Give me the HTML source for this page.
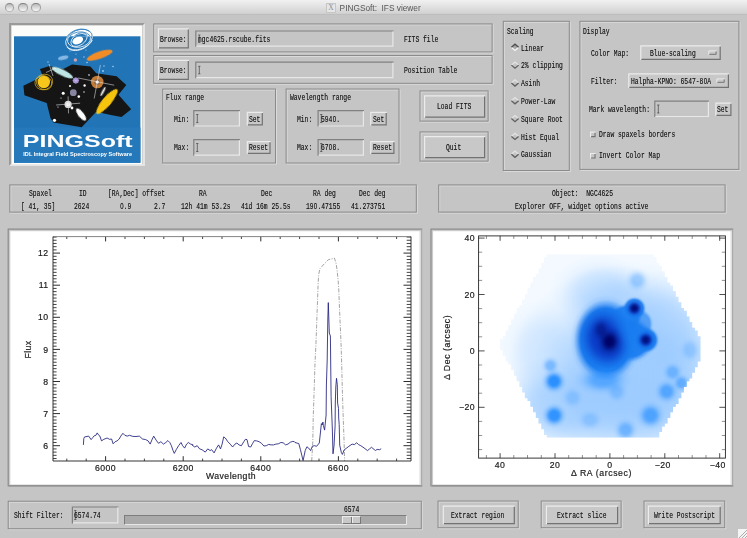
<!DOCTYPE html>
<html lang="en"><head><meta charset="utf-8"><title>PINGSoft: IFS viewer</title>
<style>
html,body{margin:0;padding:0}
body{width:747px;height:538px;overflow:hidden;background:#c5c5c5;position:relative;font-family:"Liberation Mono",monospace}
div,svg{position:absolute;box-sizing:content-box}
.m{font:8.8px/14px "Liberation Mono",monospace;color:#1c1c1c;text-shadow:0 0 0.45px rgba(20,20,20,.55);white-space:pre;transform-origin:0 0;transform:scaleX(0.722);height:14px}
.z{display:inline-block;width:5.280px;text-align:center;font-family:"Liberation Sans",sans-serif;font-size:8.27px}
.fl{fill:none;stroke:#fff;stroke-opacity:.38;stroke-width:1}.fk{fill:none;stroke:#8b8b8b;stroke-width:1}
.bl{fill:none;stroke:#ececec}.bd{fill:none;stroke:#727272}.sd{fill:none;stroke:#808080}.sl{fill:none;stroke:#e8e8e8}
.pf{background:#fff;border:2px solid;border-color:#9a9a9a #e4e4e4 #e4e4e4 #9a9a9a}
#tb{left:0;top:0;width:747px;height:15px;background:linear-gradient(#f1f1f1 0,#d2d2d2 13.4px,#c0c0c0 14.2px,#bebebe 14.5px,#c5c5c5 15px)}
.tl{width:7.6px;height:7.6px;border-radius:50%;border:0.8px solid;border-color:#858585 #9c9c9c #b8b8b8 #9c9c9c;background:linear-gradient(#b9b9b9,#dcdcdc 55%,#f6f6f6)}
#tt{left:339.6px;top:2.1px;font:8.3px/12px "Liberation Sans",sans-serif;color:#555;white-space:pre;opacity:.99}
#xi{left:326px;top:3.4px;width:8px;height:8px;background:#e6e6e6;border:1px solid #c6c6c6;font:7.5px/8px "Liberation Serif",serif;color:#8c8c8c;text-align:center}
#xi span{position:relative}
#tr{left:124.2px;top:515.3px;width:281px;height:7.4px;background:#a9a9a9;border:1px solid;border-color:#7d7d7d #e6e6e6 #e6e6e6 #7d7d7d}
#th{left:342px;top:516.4px;width:17.4px;height:5.4px;background:linear-gradient(90deg,#c8c8c8 0,#c8c8c8 8.2px,#777 8.2px,#777 8.9px,#eee 8.9px,#eee 9.6px,#c8c8c8 9.6px);border:0.9px solid;border-color:#eee #777 #777 #eee}
#p1 text,#p2 text{font:8.7px "Liberation Sans",sans-serif;fill:#161616;stroke:#161616;stroke-width:0.18px;letter-spacing:0.45px}
.pl{opacity:.99}
#lg text{opacity:.99}
#grip{left:738px;top:529px;width:9px;height:9px;background:#f4f4f4}
</style></head>
<body>
<svg id="bg" style="left:0;top:0" width="747" height="538" viewBox="0 0 747 538"><rect x="154.70" y="24.90" width="338.40" height="28.00" class="fl"/><rect x="153.70" y="23.90" width="338.40" height="28.00" class="fk"/><rect x="157.80" y="28.20" width="31.10" height="20.20" fill="#c8c8c8"/><path d="M158.40 48.40V28.80H188.90" class="bl" stroke-width="1.2"/><path d="M159.00 47.80H188.30V29.40" class="bd" stroke-width="1.2"/><path d="M195.80 46.70V31.00H393.50" class="sd" stroke-width="1.2"/><path d="M196.40 46.10H392.90V31.60" class="sl" stroke-width="1.2"/><rect x="154.70" y="56.50" width="338.40" height="27.80" class="fl"/><rect x="153.70" y="55.50" width="338.40" height="27.80" class="fk"/><rect x="157.80" y="59.80" width="31.10" height="20.20" fill="#c8c8c8"/><path d="M158.40 80.00V60.40H188.90" class="bl" stroke-width="1.2"/><path d="M159.00 79.40H188.30V61.00" class="bd" stroke-width="1.2"/><path d="M195.80 78.20V62.20H393.50" class="sd" stroke-width="1.2"/><path d="M196.40 77.60H392.90V62.80" class="sl" stroke-width="1.2"/><path d="M199.30 35.00V42.50M198.20 35.00h2.2M198.20 42.50h2.2" stroke="#4a4a4a" stroke-width="0.75" fill="none"/><path d="M199.30 66.30V73.80M198.20 66.30h2.2M198.20 73.80h2.2" stroke="#4a4a4a" stroke-width="0.75" fill="none"/><rect x="163.70" y="90.00" width="112.80" height="74.00" class="fl"/><rect x="162.70" y="89.00" width="112.80" height="74.00" class="fk"/><path d="M193.80 126.60V110.60H240.00" class="sd" stroke-width="1.2"/><path d="M194.40 126.00H239.40V111.20" class="sl" stroke-width="1.2"/><rect x="246.70" y="111.80" width="16.20" height="13.70" fill="#c8c8c8"/><path d="M247.30 125.50V112.40H262.90" class="bl" stroke-width="1.2"/><path d="M247.90 124.90H262.30V113.00" class="bd" stroke-width="1.2"/><path d="M193.80 155.80V139.60H240.00" class="sd" stroke-width="1.2"/><path d="M194.40 155.20H239.40V140.20" class="sl" stroke-width="1.2"/><rect x="246.70" y="141.00" width="23.90" height="13.00" fill="#c8c8c8"/><path d="M247.30 154.00V141.60H270.60" class="bl" stroke-width="1.2"/><path d="M247.90 153.40H270.00V142.20" class="bd" stroke-width="1.2"/><path d="M197.30 114.50V122.50M196.20 114.50h2.2M196.20 122.50h2.2" stroke="#4a4a4a" stroke-width="0.75" fill="none"/><path d="M197.30 143.50V151.50M196.20 143.50h2.2M196.20 151.50h2.2" stroke="#4a4a4a" stroke-width="0.75" fill="none"/><rect x="287.10" y="90.00" width="112.90" height="74.00" class="fl"/><rect x="286.10" y="89.00" width="112.90" height="74.00" class="fk"/><path d="M318.10 126.60V110.60H364.00" class="sd" stroke-width="1.2"/><path d="M318.70 126.00H363.40V111.20" class="sl" stroke-width="1.2"/><rect x="370.20" y="111.80" width="16.60" height="13.70" fill="#c8c8c8"/><path d="M370.80 125.50V112.40H386.80" class="bl" stroke-width="1.2"/><path d="M371.40 124.90H386.20V113.00" class="bd" stroke-width="1.2"/><path d="M318.10 155.80V139.60H364.00" class="sd" stroke-width="1.2"/><path d="M318.70 155.20H363.40V140.20" class="sl" stroke-width="1.2"/><rect x="370.20" y="141.00" width="24.30" height="13.00" fill="#c8c8c8"/><path d="M370.80 154.00V141.60H394.50" class="bl" stroke-width="1.2"/><path d="M371.40 153.40H393.90V142.20" class="bd" stroke-width="1.2"/><path d="M321.30 114.50V122.50M320.20 114.50h2.2M320.20 122.50h2.2" stroke="#4a4a4a" stroke-width="0.75" fill="none"/><path d="M321.30 143.50V151.50M320.20 143.50h2.2M320.20 151.50h2.2" stroke="#4a4a4a" stroke-width="0.75" fill="none"/><rect x="421.00" y="91.90" width="68.10" height="30.20" class="fl"/><rect x="420.00" y="90.90" width="68.10" height="30.20" class="fk"/><rect x="424.00" y="95.30" width="61.20" height="22.40" fill="#c8c8c8"/><path d="M424.60 117.70V95.90H485.20" class="bl" stroke-width="1.2"/><path d="M425.20 117.10H484.60V96.50" class="bd" stroke-width="1.2"/><rect x="421.00" y="132.90" width="68.10" height="29.20" class="fl"/><rect x="420.00" y="131.90" width="68.10" height="29.20" class="fk"/><rect x="424.00" y="136.00" width="61.20" height="22.20" fill="#c8c8c8"/><path d="M424.60 158.20V136.60H485.20" class="bl" stroke-width="1.2"/><path d="M425.20 157.60H484.60V137.20" class="bd" stroke-width="1.2"/><rect x="504.30" y="22.30" width="66.00" height="149.20" class="fl"/><rect x="503.30" y="21.30" width="66.00" height="149.20" class="fk"/><path d="M511.40 47.30L515.00 44.20L518.60 47.30L515.00 50.40Z" fill="#a6a6a6"/><path d="M511.40 47.30L515.00 50.40L518.60 47.30" fill="none" stroke="#f6f6f6" stroke-width="1.3"/><path d="M511.40 47.30L515.00 44.20L518.60 47.30" fill="none" stroke="#4e4e4e" stroke-width="1.3"/><path d="M511.40 65.12L515.00 62.02L518.60 65.12" fill="none" stroke="#e4e4e4" stroke-width="1.2"/><path d="M511.40 65.12L515.00 68.22L518.60 65.12" fill="none" stroke="#606060" stroke-width="1.3"/><path d="M511.40 82.94L515.00 79.84L518.60 82.94" fill="none" stroke="#e4e4e4" stroke-width="1.2"/><path d="M511.40 82.94L515.00 86.04L518.60 82.94" fill="none" stroke="#606060" stroke-width="1.3"/><path d="M511.40 100.76L515.00 97.66L518.60 100.76" fill="none" stroke="#e4e4e4" stroke-width="1.2"/><path d="M511.40 100.76L515.00 103.86L518.60 100.76" fill="none" stroke="#606060" stroke-width="1.3"/><path d="M511.40 118.58L515.00 115.48L518.60 118.58" fill="none" stroke="#e4e4e4" stroke-width="1.2"/><path d="M511.40 118.58L515.00 121.68L518.60 118.58" fill="none" stroke="#606060" stroke-width="1.3"/><path d="M511.40 136.40L515.00 133.30L518.60 136.40" fill="none" stroke="#e4e4e4" stroke-width="1.2"/><path d="M511.40 136.40L515.00 139.50L518.60 136.40" fill="none" stroke="#606060" stroke-width="1.3"/><path d="M511.40 154.22L515.00 151.12L518.60 154.22" fill="none" stroke="#e4e4e4" stroke-width="1.2"/><path d="M511.40 154.22L515.00 157.32L518.60 154.22" fill="none" stroke="#606060" stroke-width="1.3"/><rect x="580.90" y="22.30" width="159.00" height="148.10" class="fl"/><rect x="579.90" y="21.30" width="159.00" height="148.10" class="fk"/><rect x="640.20" y="45.30" width="80.60" height="14.60" fill="#c8c8c8"/><path d="M640.80 59.90V45.90H720.80" class="bl" stroke-width="1.2"/><path d="M641.40 59.30H720.20V46.50" class="bd" stroke-width="1.2"/><rect x="708.30" y="50.40" width="8.30" height="4.40" fill="#c8c8c8"/><path d="M708.80 54.80V50.90H716.60" class="bl" stroke-width="1.0"/><path d="M709.30 54.30H716.10V51.40" class="bd" stroke-width="1.0"/><rect x="628.20" y="73.30" width="100.80" height="14.60" fill="#c8c8c8"/><path d="M628.80 87.90V73.90H729.00" class="bl" stroke-width="1.2"/><path d="M629.40 87.30H728.40V74.50" class="bd" stroke-width="1.2"/><rect x="716.40" y="78.40" width="8.30" height="4.40" fill="#c8c8c8"/><path d="M716.90 82.80V78.90H724.70" class="bl" stroke-width="1.0"/><path d="M717.40 82.30H724.20V79.40" class="bd" stroke-width="1.0"/><path d="M654.80 117.10V101.10H709.00" class="sd" stroke-width="1.2"/><path d="M655.40 116.50H708.40V101.70" class="sl" stroke-width="1.2"/><path d="M658.30 105.00V113.00M657.20 105.00h2.2M657.20 113.00h2.2" stroke="#4a4a4a" stroke-width="0.75" fill="none"/><rect x="715.30" y="102.50" width="16.20" height="13.50" fill="#c8c8c8"/><path d="M715.90 116.00V103.10H731.50" class="bl" stroke-width="1.2"/><path d="M716.50 115.40H730.90V103.70" class="bd" stroke-width="1.2"/><path d="M590.55 137.20V132.15H595.60" class="bl" stroke-width="1.1"/><path d="M591.10 136.65H595.05V132.70" class="bd" stroke-width="1.1"/><path d="M590.55 158.60V153.55H595.60" class="bl" stroke-width="1.1"/><path d="M591.10 158.05H595.05V154.10" class="bd" stroke-width="1.1"/><rect x="10.80" y="185.90" width="406.50" height="27.20" class="fl"/><rect x="9.80" y="184.90" width="406.50" height="27.20" class="fk"/><rect x="439.70" y="185.90" width="286.40" height="27.20" class="fl"/><rect x="438.70" y="184.90" width="286.40" height="27.20" class="fk"/><rect x="7.60" y="228.60" width="414.60" height="257.80" fill="#cbcbcb"/><path d="M8.20 486.40V229.20H422.20" fill="none" stroke="#8a8a8a" stroke-width="1.2"/><path d="M10.30 484.90H420.10V231.20" fill="none" stroke="#e2e2e2" stroke-width="1.4"/><path d="M8.80 485.80H422.20" fill="none" stroke="#7c7c7c" stroke-width="1.2"/><path d="M421.70 486.40V229.80" fill="none" stroke="#a4a4a4" stroke-width="1"/><rect x="10.30" y="231.20" width="409.20" height="253.10" fill="#fff"/><rect x="430.40" y="228.60" width="302.80" height="257.80" fill="#cbcbcb"/><path d="M431.00 486.40V229.20H733.20" fill="none" stroke="#8a8a8a" stroke-width="1.2"/><path d="M433.10 484.90H731.20V231.20" fill="none" stroke="#e2e2e2" stroke-width="1.4"/><path d="M431.60 485.80H733.20" fill="none" stroke="#7c7c7c" stroke-width="1.2"/><path d="M732.70 486.40V229.80" fill="none" stroke="#a4a4a4" stroke-width="1"/><rect x="433.10" y="231.20" width="297.50" height="253.10" fill="#fff"/><rect x="9.20" y="502.20" width="413.10" height="27.50" class="fl"/><rect x="8.20" y="501.20" width="413.10" height="27.50" class="fk"/><path d="M72.40 523.50V507.00H118.40" class="sd" stroke-width="1.2"/><path d="M73.00 522.90H117.80V507.60" class="sl" stroke-width="1.2"/><path d="M75.30 510.50V519.50M74.20 510.50h2.2M74.20 519.50h2.2" stroke="#4a4a4a" stroke-width="0.75" fill="none"/><rect x="439.00" y="502.00" width="80.20" height="26.70" class="fl"/><rect x="438.00" y="501.00" width="80.20" height="26.70" class="fk"/><rect x="442.70" y="505.60" width="72.20" height="18.70" fill="#c8c8c8"/><path d="M443.30 524.30V506.20H514.90" class="bl" stroke-width="1.2"/><path d="M443.90 523.70H514.30V506.80" class="bd" stroke-width="1.2"/><rect x="542.20" y="502.00" width="79.90" height="26.70" class="fl"/><rect x="541.20" y="501.00" width="79.90" height="26.70" class="fk"/><rect x="545.80" y="505.60" width="72.40" height="18.70" fill="#c8c8c8"/><path d="M546.40 524.30V506.20H618.20" class="bl" stroke-width="1.2"/><path d="M547.00 523.70H617.60V506.80" class="bd" stroke-width="1.2"/><rect x="645.00" y="502.00" width="80.70" height="26.70" class="fl"/><rect x="644.00" y="501.00" width="80.70" height="26.70" class="fk"/><rect x="647.80" y="505.60" width="73.00" height="18.70" fill="#c8c8c8"/><path d="M648.40 524.30V506.20H720.80" class="bl" stroke-width="1.2"/><path d="M649.00 523.70H720.20V506.80" class="bd" stroke-width="1.2"/></svg>
<div id="tb"></div>
<div class="tl" style="left:4.9px;top:2.7px"></div>
<div class="tl" style="left:18.0px;top:2.7px"></div>
<div class="tl" style="left:31.4px;top:2.7px"></div>
<div id="xi"><span>X</span></div>
<div id="tt">PINGSoft:  IFS viewer</div>
<div class="pf" style="left:9.2px;top:23.2px;width:131.4px;height:138.4px;border-width:2px 2px 2px 2px;background:none"></div>
<svg id="lg" style="left:0;top:0" width="160" height="170" viewBox="0 0 160 170">
<defs><filter id="b1" x="-30%" y="-30%" width="160%" height="160%"><feGaussianBlur stdDeviation="0.7"/></filter><filter id="b2" x="-30%" y="-30%" width="160%" height="160%"><feGaussianBlur stdDeviation="0.35"/></filter></defs>
<rect x="11.6" y="25.6" width="130.6" height="138.6" fill="#fcfcfa"/>
<rect x="14" y="36.3" width="126.4" height="126.5" fill="#2175b7"/>
<rect x="14" y="127.5" width="126.4" height="35.3" fill="#2579bb"/>
<polygon points="39.9,68.9 49.6,66.1 63.2,68.9 72,64.6 90.4,66.5 96.2,73.3 116.6,76.2 126.3,85 118.5,94.7 131.2,109.2 121.5,117 110.8,115 96.2,111.7 81.7,127.3 53.5,122.4 50.6,118.5 46.7,103 24.4,95.2 23.4,85.7 42.8,76.2" fill="#151515"/>
<clipPath id="cw"><rect x="11.6" y="25.6" width="130.6" height="10.7"/></clipPath><clipPath id="cb"><rect x="14" y="36.3" width="126.4" height="60"/></clipPath>
<g clip-path="url(#cw)"><g fill="none" stroke="#2b7bbd" stroke-width="0.75" transform="translate(79 39.6) rotate(-24)"><ellipse rx="14" ry="9.5"/><ellipse rx="11.6" ry="7.6" transform="rotate(14)"/><ellipse rx="9" ry="5.6" transform="rotate(-10)"/><path d="M-14 2C-12 10 2 13 12 6M-9 -8C-2 -12 9 -10 13 -3" /><ellipse rx="8.2" ry="5" fill="#2b7bbd" stroke="none"/></g></g>
<g clip-path="url(#cb)"><g fill="none" stroke="#fff" stroke-width="0.75" transform="translate(79 39.6) rotate(-24)"><ellipse rx="14" ry="9.5"/><ellipse rx="11.6" ry="7.6" transform="rotate(14)"/><ellipse rx="9" ry="5.6" transform="rotate(-10)"/><path d="M-14 2C-12 10 2 13 12 6M-9 -8C-2 -12 9 -10 13 -3" /><ellipse rx="5.6" ry="3.6" fill="#fff" stroke="none" transform="translate(-1.5 0.3)"/></g></g>
<ellipse cx="99.6" cy="55.2" rx="13.5" ry="3.6" fill="#f28c28" transform="rotate(-19 99.6 55.2)" filter="url(#b2)"/>
<ellipse cx="63.2" cy="57.8" rx="5.2" ry="2" fill="#86b8e6" transform="rotate(-12 63.2 57.8)" filter="url(#b2)"/>
<circle cx="75.4" cy="60" r="1.7" fill="#cfa3b4"/>
<g fill="#9fd0f5"><circle cx="48" cy="62" r="0.7"/><circle cx="84" cy="57" r="0.7"/><circle cx="87" cy="62.5" r="0.8"/><circle cx="104" cy="66" r="0.7"/><circle cx="113" cy="66.5" r="0.8"/><circle cx="103" cy="71" r="0.9"/><circle cx="76" cy="54" r="0.6"/><circle cx="86" cy="50" r="0.6"/><circle cx="70" cy="51" r="0.5"/></g>
<ellipse cx="62.3" cy="72.6" rx="11.8" ry="3" fill="#bfe6e4" transform="rotate(26 62.3 72.6)" filter="url(#b2)"/>
<path d="M49 64L53 76M46 72.5L56 68" stroke="#fff" stroke-width="0.5" fill="none"/>
<g transform="translate(43.8 82)"><circle r="6.2" fill="#f7c61a"/><g fill="none" stroke="#f0c020" stroke-width="0.6"><ellipse rx="9" ry="7.6" transform="rotate(-20)"/><ellipse rx="8" ry="6.8" transform="rotate(30) translate(0.6 0.4)"/></g></g>
<g transform="translate(97.2 82)"><circle r="6.3" fill="#c37b35"/><circle r="3" fill="#8a6a50"/><circle r="1.6" fill="#fff"/><path d="M-19 -4L17 3.2M3.2 -17L-3 16.5" stroke="#e8e8e8" stroke-width="0.55" fill="none"/></g>
<circle cx="75.8" cy="80.6" r="3" fill="#9c86cc"/><path d="M72.5 80.6h6.6M75.8 77.3v6.6M73.5 78.3l4.6 4.6M73.5 82.9l4.6 -4.6" stroke="#d6c8f0" stroke-width="0.4"/>
<circle cx="73.3" cy="92.7" r="3.4" fill="#86849f"/>
<g fill="#fff"><circle cx="70" cy="86" r="1"/><circle cx="84.6" cy="85.5" r="1.2"/><circle cx="63.2" cy="93.3" r="1.5"/><circle cx="78.8" cy="96.6" r="1.3"/><circle cx="54.5" cy="120.3" r="1.6"/><circle cx="89" cy="75" r="0.8"/><circle cx="84" cy="92" r="0.7"/><circle cx="61" cy="98" r="0.6"/><circle cx="72" cy="108" r="1.4"/><circle cx="58" cy="107" r="0.6"/></g>
<g transform="translate(68.1 104.4)"><circle r="3.6" fill="#d8d8d8" filter="url(#b1)"/><circle r="1.8" fill="#fff"/><path d="M-12 0.6L12 -1.2M0 -8L0.4 9" stroke="#ddd" stroke-width="0.6"/></g>
<ellipse cx="106.9" cy="101.5" rx="15.8" ry="4.4" fill="#f7c411" transform="rotate(-50 106.9 101.5)" filter="url(#b1)"/>
<ellipse cx="103" cy="91.5" rx="5" ry="1" fill="#eee" transform="rotate(-62 103 91.5)" filter="url(#b2)"/>
<ellipse cx="81" cy="114.6" rx="7.5" ry="2.8" fill="#fff" transform="rotate(52 81 114.6)" filter="url(#b1)"/>
<text x="0" y="0" transform="translate(22.8 147.1) scale(1.595 1)" style="font:bold 15.7px 'Liberation Sans',sans-serif;fill:#fff">PINGSoft</text>
<text x="0" y="0" transform="translate(23.3 155.7) scale(1.14 1)" style="font:bold 4.9px 'Liberation Sans',sans-serif;fill:#fff">IDL Integral Field Spectroscopy Software</text>
</svg>
<div class="m" style="left:159.90px;top:32.85px;">Browse:</div>
<div class="m" style="left:198.30px;top:32.85px;">ngc4625.rscube.fits</div>
<div class="m" style="left:403.60px;top:32.85px;">FITS file</div>
<div class="m" style="left:159.90px;top:64.35px;">Browse:</div>
<div class="m" style="left:403.60px;top:64.35px;">Position Table</div>
<div class="m" style="left:165.80px;top:91.35px;">Flux range</div>
<div class="m" style="left:173.50px;top:112.85px;">Min:</div>
<div class="m" style="left:249.20px;top:112.85px;">Set</div>
<div class="m" style="left:173.50px;top:141.35px;">Max:</div>
<div class="m" style="left:249.20px;top:141.35px;">Reset</div>
<div class="m" style="left:289.50px;top:91.35px;">Wavelength range</div>
<div class="m" style="left:296.80px;top:112.85px;">Min:</div>
<div class="m" style="left:320.50px;top:112.85px;">594<span class="z">0</span>.</div>
<div class="m" style="left:372.70px;top:112.85px;">Set</div>
<div class="m" style="left:296.80px;top:141.35px;">Max:</div>
<div class="m" style="left:320.50px;top:141.35px;">67<span class="z">0</span>8.</div>
<div class="m" style="left:372.70px;top:141.35px;">Reset</div>
<div class="m" style="left:436.60px;top:100.35px;">Load FITS</div>
<div class="m" style="left:446.30px;top:141.35px;">Quit</div>
<div class="m" style="left:506.70px;top:24.85px;">Scaling</div>
<div class="m" style="left:520.70px;top:41.55px;">Linear</div>
<div class="m" style="left:520.70px;top:59.37px;">2% clipping</div>
<div class="m" style="left:520.70px;top:77.19px;">Asinh</div>
<div class="m" style="left:520.70px;top:95.01px;">Power-Law</div>
<div class="m" style="left:520.70px;top:112.83px;">Square Root</div>
<div class="m" style="left:520.70px;top:130.65px;">Hist Equal</div>
<div class="m" style="left:520.70px;top:148.47px;">Gaussian</div>
<div class="m" style="left:583.00px;top:24.85px;">Display</div>
<div class="m" style="left:590.60px;top:47.05px;">Color Map:</div>
<div class="m" style="left:650.40px;top:47.05px;">Blue-scaling</div>
<div class="m" style="left:590.60px;top:75.05px;">Filter:</div>
<div class="m" style="left:631.40px;top:75.05px;">Halpha-KPNO: 6547-8<span class="z">0</span>A</div>
<div class="m" style="left:588.60px;top:103.25px;">Mark wavelength:</div>
<div class="m" style="left:716.90px;top:103.25px;">Set</div>
<div class="m" style="left:598.80px;top:127.95px;">Draw spaxels borders</div>
<div class="m" style="left:598.80px;top:149.45px;">Invert Color Map</div>
<div class="m" style="left:28.60px;top:187.15px;">Spaxel</div>
<div class="m" style="left:21.20px;top:199.65px;">[ 41, 35]</div>
<div class="m" style="left:78.70px;top:187.15px;">ID</div>
<div class="m" style="left:74.40px;top:199.65px;">2624</div>
<div class="m" style="left:107.90px;top:187.15px;">[RA,Dec] offset</div>
<div class="m" style="left:119.90px;top:199.65px;"><span class="z">0</span>.9</div>
<div class="m" style="left:154.30px;top:199.65px;">2.7</div>
<div class="m" style="left:198.70px;top:187.15px;">RA</div>
<div class="m" style="left:180.80px;top:199.65px;">12h 41m 53.2s</div>
<div class="m" style="left:260.50px;top:187.15px;">Dec</div>
<div class="m" style="left:240.90px;top:199.65px;">41d 16m 25.5s</div>
<div class="m" style="left:312.90px;top:187.15px;">RA deg</div>
<div class="m" style="left:305.80px;top:199.65px;">19<span class="z">0</span>.47155</div>
<div class="m" style="left:358.70px;top:187.15px;">Dec deg</div>
<div class="m" style="left:351.00px;top:199.65px;">41.273751</div>
<div class="m" style="left:552.30px;top:186.85px;">Object:  NGC4625</div>
<div class="m" style="left:515.30px;top:199.65px;">Explorer OFF, widget options active</div>
<svg id="p1" style="left:0;top:0" width="747" height="538" viewBox="0 0 747 538">
<polyline points="311.7,461.0 312.8,442.0 313.2,418.0 313.9,397.7 315.0,363.0 316.0,342.7 316.6,326.6 317.3,306.0 318.2,282.3 318.7,274.8 319.8,268.9 324.1,264.0 328.4,259.7 334.4,258.1 336.0,263.0 337.0,269.4 338.1,280.2 338.7,287.7 339.4,306.0 340.3,326.6 341.0,342.7 341.6,361.0 342.4,392.3 343.2,417.0 344.1,442.0 344.6,461.0" fill="none" stroke="#7c7c7c" stroke-width="0.7" stroke-dasharray="4 1.4 1 1.4"/>
<polyline points="83.4,444.9 83.8,438.5 84.6,436.9 87.0,436.5 88.7,436.1 91.1,439.6 92.7,437.7 94.3,435.7 95.9,435.3 97.2,432.9 98.8,435.3 99.9,436.1 101.5,440.9 103.9,439.3 107.1,438.0 109.5,439.3 111.6,439.0 113.1,443.8 115.2,441.7 117.1,440.9 119.2,439.0 120.8,436.1 122.9,433.3 124.8,435.3 127.2,436.1 129.6,435.3 132.8,436.4 136.0,436.5 139.3,436.1 142.5,439.0 145.7,439.6 148.1,440.9 150.2,444.1 151.8,440.1 153.7,436.1 156.1,440.1 158.5,443.3 160.9,441.7 163.4,444.1 165.8,442.5 167.9,440.6 169.8,442.5 171.4,445.7 173.0,450.5 174.3,453.4 176.2,449.7 178.6,445.7 181.0,442.5 182.6,445.7 184.6,448.1 186.6,444.1 188.3,442.5 190.7,444.1 193.1,444.9 192.4,445.4 194.8,447.0 197.2,445.7 199.6,448.9 202.0,449.7 205.3,452.1 207.7,448.9 210.1,450.5 211.7,449.7 214.1,452.9 216.5,448.1 218.6,444.9 220.5,448.9 222.1,444.1 223.7,436.9 225.3,438.0 227.8,441.7 230.2,444.1 232.6,447.0 235.0,444.1 236.9,443.0 239.0,444.9 241.4,445.7 243.8,441.7 245.4,439.3 247.0,439.6 248.6,446.5 250.7,447.0 252.7,443.3 254.3,440.6 256.7,440.9 259.1,441.7 261.5,443.3 263.9,446.0 266.3,445.7 268.7,444.4 271.1,444.9 273.5,444.9 275.9,444.1 278.4,443.8 280.8,442.5 283.2,442.8 285.6,444.9 288.0,444.1 290.4,442.2 292.8,441.4 294.4,441.7 295.0,442.5 298.8,443.6 300.4,449.5 303.1,460.6 305.2,450.6 306.9,446.8 308.5,447.9 310.6,450.6 312.3,446.3 314.4,445.7 316.6,446.3 319.3,443.0 321.4,423.6 322.2,425.0 322.9,422.0 323.4,425.5 324.6,430.1 326.1,415.0 326.4,385.0 327.2,360.0 327.8,320.0 328.3,302.6 329.3,333.0 330.4,336.0 330.7,363.0 331.1,396.7 331.9,418.0 332.3,428.0 333.0,453.8 334.0,446.0 335.1,425.8 335.3,403.0 335.8,387.0 336.5,378.3 337.3,384.8 337.6,403.0 338.5,408.5 338.7,418.0 339.2,424.7 339.7,445.2 341.4,452.7 342.4,454.4 344.1,450.0 346.8,447.9 348.9,446.3 352.1,444.1 354.3,444.6 356.7,442.8 358.6,444.6 360.8,445.7 364.0,447.9 367.5,450.6 369.4,449.0 371.5,447.3 374.2,449.5 375.5,450.5 377.1,449.4 379.5,449.7 381.2,448.8" fill="none" stroke="#20207c" stroke-width="0.85" stroke-linejoin="round"/>
<path d="M66.8 461.0v-2.4M66.8 236.6v2.4M86.2 461.0v-2.4M86.2 236.6v2.4M125.0 461.0v-2.4M125.0 236.6v2.4M144.4 461.0v-2.4M144.4 236.6v2.4M163.8 461.0v-2.4M163.8 236.6v2.4M202.6 461.0v-2.4M202.6 236.6v2.4M222.0 461.0v-2.4M222.0 236.6v2.4M241.4 461.0v-2.4M241.4 236.6v2.4M280.2 461.0v-2.4M280.2 236.6v2.4M299.6 461.0v-2.4M299.6 236.6v2.4M319.0 461.0v-2.4M319.0 236.6v2.4M357.8 461.0v-2.4M357.8 236.6v2.4M377.2 461.0v-2.4M377.2 236.6v2.4M396.6 461.0v-2.4M396.6 236.6v2.4M53.0 458.54h3.6M411.0 458.54h-4.3M53.0 455.33h3.6M411.0 455.33h-4.3M53.0 452.12h3.6M411.0 452.12h-4.3M53.0 448.91h3.6M411.0 448.91h-4.3M53.0 442.49h3.6M411.0 442.49h-4.3M53.0 439.28h3.6M411.0 439.28h-4.3M53.0 436.07h3.6M411.0 436.07h-4.3M53.0 432.86h3.6M411.0 432.86h-4.3M53.0 429.65h3.6M411.0 429.65h-4.3M53.0 426.44h3.6M411.0 426.44h-4.3M53.0 423.23h3.6M411.0 423.23h-4.3M53.0 420.02h3.6M411.0 420.02h-4.3M53.0 416.81h3.6M411.0 416.81h-4.3M53.0 410.39h3.6M411.0 410.39h-4.3M53.0 407.18h3.6M411.0 407.18h-4.3M53.0 403.97h3.6M411.0 403.97h-4.3M53.0 400.76h3.6M411.0 400.76h-4.3M53.0 397.55h3.6M411.0 397.55h-4.3M53.0 394.34h3.6M411.0 394.34h-4.3M53.0 391.13h3.6M411.0 391.13h-4.3M53.0 387.92h3.6M411.0 387.92h-4.3M53.0 384.71h3.6M411.0 384.71h-4.3M53.0 378.29h3.6M411.0 378.29h-4.3M53.0 375.08h3.6M411.0 375.08h-4.3M53.0 371.87h3.6M411.0 371.87h-4.3M53.0 368.66h3.6M411.0 368.66h-4.3M53.0 365.45h3.6M411.0 365.45h-4.3M53.0 362.24h3.6M411.0 362.24h-4.3M53.0 359.03h3.6M411.0 359.03h-4.3M53.0 355.82h3.6M411.0 355.82h-4.3M53.0 352.61h3.6M411.0 352.61h-4.3M53.0 346.19h3.6M411.0 346.19h-4.3M53.0 342.98h3.6M411.0 342.98h-4.3M53.0 339.77h3.6M411.0 339.77h-4.3M53.0 336.56h3.6M411.0 336.56h-4.3M53.0 333.35h3.6M411.0 333.35h-4.3M53.0 330.14h3.6M411.0 330.14h-4.3M53.0 326.93h3.6M411.0 326.93h-4.3M53.0 323.72h3.6M411.0 323.72h-4.3M53.0 320.51h3.6M411.0 320.51h-4.3M53.0 314.09h3.6M411.0 314.09h-4.3M53.0 310.88h3.6M411.0 310.88h-4.3M53.0 307.67h3.6M411.0 307.67h-4.3M53.0 304.46h3.6M411.0 304.46h-4.3M53.0 301.25h3.6M411.0 301.25h-4.3M53.0 298.04h3.6M411.0 298.04h-4.3M53.0 294.83h3.6M411.0 294.83h-4.3M53.0 291.62h3.6M411.0 291.62h-4.3M53.0 288.41h3.6M411.0 288.41h-4.3M53.0 281.99h3.6M411.0 281.99h-4.3M53.0 278.78h3.6M411.0 278.78h-4.3M53.0 275.57h3.6M411.0 275.57h-4.3M53.0 272.36h3.6M411.0 272.36h-4.3M53.0 269.15h3.6M411.0 269.15h-4.3M53.0 265.94h3.6M411.0 265.94h-4.3M53.0 262.73h3.6M411.0 262.73h-4.3M53.0 259.52h3.6M411.0 259.52h-4.3M53.0 256.31h3.6M411.0 256.31h-4.3M53.0 249.89h3.6M411.0 249.89h-4.3M53.0 246.68h3.6M411.0 246.68h-4.3M53.0 243.47h3.6M411.0 243.47h-4.3M53.0 240.26h3.6M411.0 240.26h-4.3M53.0 237.05h3.6M411.0 237.05h-4.3" stroke="#2e2e2e" stroke-width="0.9" fill="none"/>
<path d="M105.6 461.0v-4.8M105.6 236.6v4.8M183.2 461.0v-4.8M183.2 236.6v4.8M260.8 461.0v-4.8M260.8 236.6v4.8M338.4 461.0v-4.8M338.4 236.6v4.8M53.0 445.70h7M411.0 445.70h-7.5M53.0 413.60h7M411.0 413.60h-7.5M53.0 381.50h7M411.0 381.50h-7.5M53.0 349.40h7M411.0 349.40h-7.5M53.0 317.30h7M411.0 317.30h-7.5M53.0 285.20h7M411.0 285.20h-7.5M53.0 253.10h7M411.0 253.10h-7.5" stroke="#222" stroke-width="0.95" fill="none"/>
<path d="M53.0 236.6H411.0" fill="none" stroke="#777" stroke-width="0.9"/><path d="M53.0 236.6V461.0H411.0V236.6" fill="none" stroke="#2a2a2a" stroke-width="0.95"/>
<g class="pl">
<text x="48.6" y="448.8" text-anchor="end">6</text>
<text x="48.6" y="416.7" text-anchor="end">7</text>
<text x="48.6" y="384.6" text-anchor="end">8</text>
<text x="48.6" y="352.5" text-anchor="end">9</text>
<text x="48.6" y="320.4" text-anchor="end">10</text>
<text x="48.6" y="288.3" text-anchor="end">11</text>
<text x="48.6" y="256.2" text-anchor="end">12</text>
<text x="105.6" y="471.2" text-anchor="middle">6000</text>
<text x="183.2" y="471.2" text-anchor="middle">6200</text>
<text x="260.8" y="471.2" text-anchor="middle">6400</text>
<text x="338.4" y="471.2" text-anchor="middle">6600</text>
<text x="231" y="479" text-anchor="middle">Wavelength</text>
<text transform="translate(30.5 349.5) rotate(-90)" text-anchor="middle">Flux</text>
</g></svg>
<svg id="p2" style="left:0;top:0" width="747" height="538" viewBox="0 0 747 538">
<defs><radialGradient id="ga"><stop offset="0.0" stop-color="#2a90ff" stop-opacity="1.000"/><stop offset="0.1" stop-color="#2a90ff" stop-opacity="1.000"/><stop offset="0.2" stop-color="#2a90ff" stop-opacity="1.000"/><stop offset="0.3" stop-color="#2a90ff" stop-opacity="0.982"/><stop offset="0.4" stop-color="#2a90ff" stop-opacity="0.852"/><stop offset="0.5" stop-color="#2a90ff" stop-opacity="0.641"/><stop offset="0.6" stop-color="#2a90ff" stop-opacity="0.418"/><stop offset="0.7" stop-color="#2a90ff" stop-opacity="0.237"/><stop offset="0.8" stop-color="#2a90ff" stop-opacity="0.116"/><stop offset="0.9" stop-color="#2a90ff" stop-opacity="0.050"/><stop offset="1.0" stop-color="#2a90ff" stop-opacity="0.000"/></radialGradient><radialGradient id="gl"><stop offset="0.0" stop-color="#9ccbff" stop-opacity="1.000"/><stop offset="0.1" stop-color="#9ccbff" stop-opacity="1.000"/><stop offset="0.2" stop-color="#9ccbff" stop-opacity="1.000"/><stop offset="0.3" stop-color="#9ccbff" stop-opacity="1.000"/><stop offset="0.4" stop-color="#9ccbff" stop-opacity="0.936"/><stop offset="0.5" stop-color="#9ccbff" stop-opacity="0.768"/><stop offset="0.6" stop-color="#9ccbff" stop-opacity="0.552"/><stop offset="0.7" stop-color="#9ccbff" stop-opacity="0.347"/><stop offset="0.8" stop-color="#9ccbff" stop-opacity="0.191"/><stop offset="0.9" stop-color="#9ccbff" stop-opacity="0.093"/><stop offset="1.0" stop-color="#9ccbff" stop-opacity="0.000"/></radialGradient><radialGradient id="gp"><stop offset="0.0" stop-color="#187cf0" stop-opacity="1.000"/><stop offset="0.1" stop-color="#187cf0" stop-opacity="1.000"/><stop offset="0.2" stop-color="#187cf0" stop-opacity="1.000"/><stop offset="0.3" stop-color="#187cf0" stop-opacity="1.000"/><stop offset="0.4" stop-color="#187cf0" stop-opacity="1.000"/><stop offset="0.5" stop-color="#187cf0" stop-opacity="1.000"/><stop offset="0.6" stop-color="#187cf0" stop-opacity="1.000"/><stop offset="0.7" stop-color="#187cf0" stop-opacity="0.981"/><stop offset="0.8" stop-color="#187cf0" stop-opacity="0.506"/><stop offset="0.9" stop-color="#187cf0" stop-opacity="0.102"/><stop offset="1.0" stop-color="#187cf0" stop-opacity="0.000"/></radialGradient><radialGradient id="gb"><stop offset="0.0" stop-color="#0a3cc8" stop-opacity="1.000"/><stop offset="0.1" stop-color="#0a3cc8" stop-opacity="1.000"/><stop offset="0.2" stop-color="#0a3cc8" stop-opacity="1.000"/><stop offset="0.3" stop-color="#0a3cc8" stop-opacity="1.000"/><stop offset="0.4" stop-color="#0a3cc8" stop-opacity="0.929"/><stop offset="0.5" stop-color="#0a3cc8" stop-opacity="0.745"/><stop offset="0.6" stop-color="#0a3cc8" stop-opacity="0.515"/><stop offset="0.7" stop-color="#0a3cc8" stop-opacity="0.308"/><stop offset="0.8" stop-color="#0a3cc8" stop-opacity="0.159"/><stop offset="0.9" stop-color="#0a3cc8" stop-opacity="0.070"/><stop offset="1.0" stop-color="#0a3cc8" stop-opacity="0.000"/></radialGradient><radialGradient id="gn"><stop offset="0.0" stop-color="#000468" stop-opacity="1.000"/><stop offset="0.1" stop-color="#000468" stop-opacity="1.000"/><stop offset="0.2" stop-color="#000468" stop-opacity="0.986"/><stop offset="0.3" stop-color="#000468" stop-opacity="0.883"/><stop offset="0.4" stop-color="#000468" stop-opacity="0.707"/><stop offset="0.5" stop-color="#000468" stop-opacity="0.508"/><stop offset="0.6" stop-color="#000468" stop-opacity="0.326"/><stop offset="0.7" stop-color="#000468" stop-opacity="0.187"/><stop offset="0.8" stop-color="#000468" stop-opacity="0.096"/><stop offset="0.9" stop-color="#000468" stop-opacity="0.044"/><stop offset="1.0" stop-color="#000468" stop-opacity="0.000"/></radialGradient>
<clipPath id="hx"><path d="M546.8 254.4L653.8 254.4L653.8 257.2L656.6 257.2L656.6 260.0L656.6 260.0L656.6 262.9L659.3 262.9L659.3 265.7L662.1 265.7L662.1 268.5L662.1 268.5L662.1 271.3L664.8 271.3L664.8 274.1L664.8 274.1L664.8 277.0L667.5 277.0L667.5 279.8L667.5 279.8L667.5 282.6L670.3 282.6L670.3 285.4L673.0 285.4L673.0 288.2L673.0 288.2L673.0 291.1L675.8 291.1L675.8 293.9L675.8 293.9L675.8 296.7L678.5 296.7L678.5 299.5L678.5 299.5L678.5 302.3L681.3 302.3L681.3 305.2L681.3 305.2L681.3 308.0L684.0 308.0L684.0 310.8L686.8 310.8L686.8 313.6L686.8 313.6L686.8 316.4L689.5 316.4L689.5 319.3L689.5 319.3L689.5 322.1L692.2 322.1L692.2 324.9L692.2 324.9L692.2 327.7L695.0 327.7L695.0 330.5L697.7 330.5L697.7 333.4L697.7 333.4L697.7 336.2L700.5 336.2L700.5 339.0L700.5 339.0L700.5 341.8L700.5 341.8L700.5 344.6L700.5 344.6L700.5 347.5L700.5 347.5L700.5 350.3L700.5 350.3L700.5 353.1L700.5 353.1L700.5 355.9L700.5 355.9L700.5 358.7L700.5 358.7L700.5 361.6L697.7 361.6L697.7 364.4L697.7 364.4L697.7 367.2L695.0 367.2L695.0 370.0L695.0 370.0L695.0 372.8L692.2 372.8L692.2 375.7L692.2 375.7L692.2 378.5L689.5 378.5L689.5 381.3L686.8 381.3L686.8 384.1L686.8 384.1L686.8 386.9L684.0 386.9L684.0 389.8L684.0 389.8L684.0 392.6L681.3 392.6L681.3 395.4L681.3 395.4L681.3 398.2L678.5 398.2L678.5 401.0L678.5 401.0L678.5 403.9L675.8 403.9L675.8 406.7L673.0 406.7L673.0 409.5L673.0 409.5L673.0 412.3L670.3 412.3L670.3 415.1L670.3 415.1L670.3 418.0L667.5 418.0L667.5 420.8L667.5 420.8L667.5 423.6L664.8 423.6L664.8 426.4L662.1 426.4L662.1 429.2L662.1 429.2L662.1 432.1L659.3 432.1L659.3 434.9L659.3 434.9L659.3 437.5L546.8 437.5L546.8 434.9L544.0 434.9L544.0 432.1L544.0 432.1L544.0 429.2L541.3 429.2L541.3 426.4L541.3 426.4L541.3 423.6L538.5 423.6L538.5 420.8L538.5 420.8L538.5 418.0L535.8 418.0L535.8 415.1L535.8 415.1L535.8 412.3L533.0 412.3L533.0 409.5L533.0 409.5L533.0 406.7L530.3 406.7L530.3 403.9L530.3 403.9L530.3 401.0L527.5 401.0L527.5 398.2L524.8 398.2L524.8 395.4L524.8 395.4L524.8 392.6L522.1 392.6L522.1 389.8L522.1 389.8L522.1 386.9L519.3 386.9L519.3 384.1L519.3 384.1L519.3 381.3L516.6 381.3L516.6 378.5L516.6 378.5L516.6 375.7L513.8 375.7L513.8 372.8L513.8 372.8L513.8 370.0L511.1 370.0L511.1 367.2L511.1 367.2L511.1 364.4L508.3 364.4L508.3 361.6L505.6 361.6L505.6 358.7L505.6 358.7L505.6 355.9L502.8 355.9L502.8 353.1L502.8 353.1L502.8 350.3L500.1 350.3L500.1 347.5L500.1 347.5L500.1 344.6L500.1 344.6L500.1 341.8L500.1 341.8L500.1 339.0L502.8 339.0L502.8 336.2L505.6 336.2L505.6 333.4L505.6 333.4L505.6 330.5L508.3 330.5L508.3 327.7L508.3 327.7L508.3 324.9L511.1 324.9L511.1 322.1L511.1 322.1L511.1 319.3L513.8 319.3L513.8 316.4L513.8 316.4L513.8 313.6L516.6 313.6L516.6 310.8L516.6 310.8L516.6 308.0L519.3 308.0L519.3 305.2L522.1 305.2L522.1 302.3L522.1 302.3L522.1 299.5L524.8 299.5L524.8 296.7L524.8 296.7L524.8 293.9L527.5 293.9L527.5 291.1L527.5 291.1L527.5 288.2L530.3 288.2L530.3 285.4L530.3 285.4L530.3 282.6L533.0 282.6L533.0 279.8L533.0 279.8L533.0 277.0L535.8 277.0L535.8 274.1L538.5 274.1L538.5 271.3L538.5 271.3L538.5 268.5L541.3 268.5L541.3 265.7L541.3 265.7L541.3 262.9L544.0 262.9L544.0 260.0L544.0 260.0L544.0 257.2L546.8 257.2L546.8 254.4Z"/></clipPath></defs>
<g clip-path="url(#hx)">
<rect x="490" y="250" width="220" height="192" fill="#f3f9ff"/>
<ellipse cx="632" cy="372" rx="125" ry="110" fill="url(#gl)" opacity="0.95"/>
<ellipse cx="610" cy="400" rx="75" ry="50" fill="url(#gl)" opacity="0.5"/>
<ellipse cx="618" cy="305" rx="60" ry="40" fill="url(#gl)" opacity="0.5"/>
<ellipse cx="660" cy="400" rx="50" ry="45" fill="url(#gl)" opacity="0.4"/>
<ellipse cx="560" cy="405" rx="65" ry="50" fill="url(#gl)" opacity="0.7"/>
<ellipse cx="540" cy="350" rx="40" ry="50" fill="url(#gl)" opacity="0.25"/>
<ellipse cx="665" cy="330" rx="50" ry="60" fill="url(#gl)" opacity="0.5"/>
<ellipse cx="600" cy="290" rx="50" ry="35" fill="url(#gl)" opacity="0.35"/>
<ellipse cx="606" cy="340" rx="36" ry="45" fill="url(#gp)" opacity="1"/>
<ellipse cx="634.4" cy="308.5" rx="12.5" ry="12.5" fill="url(#gp)" opacity="0.9"/>
<ellipse cx="646" cy="340" rx="14" ry="14" fill="url(#gp)" opacity="0.95"/>
<ellipse cx="630" cy="340" rx="26" ry="24" fill="url(#gp)" opacity="0.95"/>
<ellipse cx="626" cy="318" rx="17" ry="15" fill="url(#gp)" opacity="0.9"/>
<ellipse cx="640" cy="324" rx="14" ry="16" fill="url(#gp)" opacity="0.6"/>
<ellipse cx="554" cy="381.3" rx="13" ry="13" fill="url(#ga)" opacity="1"/>
<ellipse cx="554.2" cy="415.4" rx="13" ry="13" fill="url(#ga)" opacity="0.95"/>
<ellipse cx="550.4" cy="365.5" rx="10" ry="10" fill="url(#ga)" opacity="0.45"/>
<ellipse cx="650.5" cy="415.4" rx="15" ry="15" fill="url(#ga)" opacity="0.7"/>
<ellipse cx="666.7" cy="391.5" rx="13" ry="13" fill="url(#ga)" opacity="0.65"/>
<ellipse cx="672.6" cy="372.2" rx="11" ry="11" fill="url(#ga)" opacity="0.45"/>
<ellipse cx="681.5" cy="383" rx="10" ry="10" fill="url(#ga)" opacity="0.55"/>
<ellipse cx="625.5" cy="430.1" rx="13" ry="13" fill="url(#ga)" opacity="0.5"/>
<ellipse cx="616.7" cy="391.9" rx="12" ry="12" fill="url(#ga)" opacity="0.3"/>
<ellipse cx="572.5" cy="397.7" rx="12" ry="12" fill="url(#ga)" opacity="0.25"/>
<ellipse cx="637.3" cy="280.3" rx="13" ry="13" fill="url(#ga)" opacity="0.35"/>
<ellipse cx="590" cy="420" rx="14" ry="12" fill="url(#ga)" opacity="0.25"/>
<ellipse cx="690" cy="350" rx="12" ry="14" fill="url(#ga)" opacity="0.25"/>
<ellipse cx="603" cy="380" rx="30" ry="16" fill="url(#ga)" opacity="0.6"/>
<ellipse cx="603" cy="337" rx="27" ry="33" fill="url(#gb)" opacity="1"/>
<ellipse cx="610" cy="347" rx="22" ry="22" fill="url(#gb)" opacity="0.8"/>
<ellipse cx="634.4" cy="308.3" rx="9.5" ry="9.5" fill="url(#gb)" opacity="0.95"/>
<ellipse cx="645.8" cy="339.9" rx="10" ry="10" fill="url(#gb)" opacity="0.95"/>
<ellipse cx="609.4" cy="341.5" rx="14" ry="16" fill="url(#gn)" opacity="1"/>
<ellipse cx="601" cy="330" rx="11" ry="14" fill="url(#gn)" opacity="0.5"/>
<ellipse cx="634.4" cy="308.3" rx="7" ry="7" fill="url(#gn)" opacity="0.8"/>
<ellipse cx="645.8" cy="339.9" rx="7.5" ry="7.5" fill="url(#gn)" opacity="0.75"/>
</g>
<path d="M706.0 458.1v-3.1M706.0 235.9v3.1M692.2 458.1v-3.1M692.2 235.9v3.1M678.5 458.1v-3.1M678.5 235.9v3.1M651.1 458.1v-3.1M651.1 235.9v3.1M637.4 458.1v-3.1M637.4 235.9v3.1M623.6 458.1v-3.1M623.6 235.9v3.1M596.2 458.1v-3.1M596.2 235.9v3.1M582.4 458.1v-3.1M582.4 235.9v3.1M568.7 458.1v-3.1M568.7 235.9v3.1M541.3 458.1v-3.1M541.3 235.9v3.1M527.5 458.1v-3.1M527.5 235.9v3.1M513.8 458.1v-3.1M513.8 235.9v3.1M486.4 458.1v-3.1M486.4 235.9v3.1M478.6 449.6h3.6M725.4 449.6h-3.6M478.6 435.5h3.6M725.4 435.5h-3.6M478.6 421.4h3.6M725.4 421.4h-3.6M478.6 393.2h3.6M725.4 393.2h-3.6M478.6 379.1h3.6M725.4 379.1h-3.6M478.6 365.0h3.6M725.4 365.0h-3.6M478.6 336.8h3.6M725.4 336.8h-3.6M478.6 322.7h3.6M725.4 322.7h-3.6M478.6 308.6h3.6M725.4 308.6h-3.6M478.6 280.4h3.6M725.4 280.4h-3.6M478.6 266.3h3.6M725.4 266.3h-3.6M478.6 252.2h3.6M725.4 252.2h-3.6" stroke="#666" stroke-width="0.7" fill="none"/>
<path d="M719.7 458.1v-4.9M719.7 235.9v4.9M664.8 458.1v-4.9M664.8 235.9v4.9M609.9 458.1v-4.9M609.9 235.9v4.9M555.0 458.1v-4.9M555.0 235.9v4.9M500.1 458.1v-4.9M500.1 235.9v4.9M478.6 407.3h6M725.4 407.3h-6M478.6 350.9h6M725.4 350.9h-6M478.6 294.5h6M725.4 294.5h-6M478.6 238.1h6M725.4 238.1h-6" stroke="#222" stroke-width="0.8" fill="none"/>
<rect x="478.6" y="235.9" width="246.79999999999995" height="222.20000000000002" fill="none" stroke="#222" stroke-width="0.9"/>
<g class="pl">
<text x="475" y="241.2" text-anchor="end">40</text>
<text x="475" y="297.6" text-anchor="end">20</text>
<text x="475" y="354.0" text-anchor="end">0</text>
<text x="475" y="410.4" text-anchor="end">−20</text>
<text x="500.1" y="468.3" text-anchor="middle">40</text>
<text x="555.0" y="468.3" text-anchor="middle">20</text>
<text x="609.9" y="468.3" text-anchor="middle">0</text>
<text x="662.8" y="468.3" text-anchor="middle">−20</text>
<text x="717.7" y="468.3" text-anchor="middle">−40</text>
<text x="601.5" y="476.3" text-anchor="middle" style="letter-spacing:0.6px">Δ RA (arcsec)</text>
<text transform="translate(450.3 347.4) rotate(-90)" text-anchor="middle" style="letter-spacing:0.6px">Δ Dec (arcsec)</text>
</g></svg>
<div class="m" style="left:13.80px;top:508.75px;">Shift Filter:</div>
<div class="m" style="left:74.40px;top:508.75px;">6574.74</div>
<div id="tr"></div><div id="th"></div>
<div class="m" style="left:343.60px;top:503.15px;">6574</div>
<div class="m" style="left:451.40px;top:508.75px;">Extract region</div>
<div class="m" style="left:556.50px;top:508.75px;">Extract slice</div>
<div class="m" style="left:653.50px;top:508.75px;">Write Postscript</div>
<div id="grip"><svg width="9" height="9" viewBox="0 0 9 9"><path d="M1 9L9 1M4 9L9 4M7 9L9 7" stroke="#999" stroke-width="0.8" fill="none"/></svg></div>
</body></html>
